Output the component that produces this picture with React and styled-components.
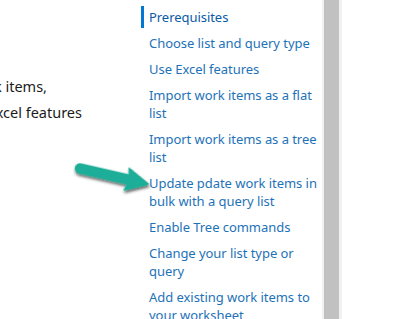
import * as React from 'react'
import styled, { createGlobalStyle } from 'styled-components'

const Global = createGlobalStyle`
    html, body {
        margin: 0;
        padding: 0;
        background-color: #ffffff;
    }
    body {
        font-family: 'Noto Sans', 'Open Sans', sans-serif;
    }
`

const Page = styled.div`
    display: flex;
    height: 319px;
    overflow: hidden;
    position: relative;
    width: 394px;
`

const Article = styled.div`
    box-sizing: border-box;
    color: #1b1b1b;
    display: flex;
    flex-flow: column;
    flex: 0 0 141px;
    font-size: 14.5px;
    line-height: 26px;
    overflow: hidden;
    padding-top: 73px;
`

const Line = styled.div`
    display: flex;
    justify-content: flex-end;
    overflow: hidden;
    padding-right: ${(props) => 141 - props.$end}px;
    white-space: nowrap;
`

const Toc = styled.nav`
    box-sizing: border-box;
    display: flex;
    flex-flow: column;
    flex: 0 0 181px;
    gap: 4px;
    padding: 6px 0 0 0;
`

const Item = styled.a`
    border-left: 3px solid ${(props) => (props.$active ? '#0078d4' : 'transparent')};
    color: ${(props) => (props.$active ? '#0a5aa5' : '#1e72b8')};
    cursor: pointer;
    display: block;
    font-size: 13px;
    letter-spacing: -0.05px;
    line-height: 18px;
    padding: 2px 0 2px 5px;
    text-decoration: none;
`

const Track = styled.div`
    background-color: #f1f1f1;
    box-sizing: border-box;
    display: flex;
    flex: 0 0 20px;
    padding: 0 3px 0 2px;
`

const Thumb = styled.div`
    background-color: #c1c1c1;
    flex: 1;
`

const Pointer = styled.svg`
    left: 70px;
    pointer-events: none;
    position: absolute;
    top: 160px;
`

const items = [
    'Prerequisites',
    'Choose list and query type',
    'Use Excel features',
    'Import work items as a flat list',
    'Import work items as a tree list',
    'Update pdate work items in bulk with a query list',
    'Enable Tree commands',
    'Change your list type or query',
    'Add existing work items to your worksheet'
]

const Arrow = () => (
    <Pointer width="90" height="40" viewBox="0 0 90 40">
        <defs>
            <filter id="shade" x="-20%" y="-40%" width="140%" height="180%">
                <feDropShadow dx="1" dy="2" stdDeviation="1.4" floodColor="#000" floodOpacity="0.65" />
            </filter>
        </defs>
        <g transform="translate(8 8) rotate(12.9)" filter="url(#shade)">
            <path
                d="M2 -4.5 L52 -4.5 L50 -11 L72 0 L50 11 L52 4.5 L2 4.5 A4.5 4.5 0 0 1 2 -4.5 Z"
                fill="#1fae98"
                stroke="#1fae98"
                strokeLinejoin="round"
                strokeWidth="1.5"
            />
        </g>
    </Pointer>
)

const App = () => {
    return (
        <Page>
            <Global />
            <Article>
                <Line $end={47}>bulk add or modify work items,</Line>
                <Line $end={82}>and then use other Excel features</Line>
            </Article>
            <Toc>
                {items.map((label, index) => (
                    <Item key={label} $active={index === 0}>
                        {label}
                    </Item>
                ))}
            </Toc>
            <Track>
                <Thumb />
            </Track>
            <Arrow />
        </Page>
    )
}

export default App
